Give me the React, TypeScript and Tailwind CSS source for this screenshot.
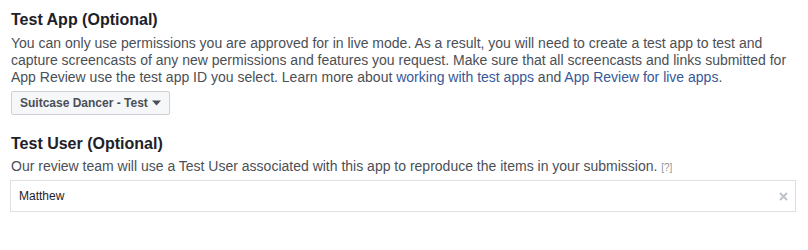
import React from "react";

export default function App() {
  return (
    <div className="w-[808px] h-[250px] bg-white pl-[11px] pr-[12px] pt-[10px]" style={{ fontFamily: '"Liberation Sans", Arial, sans-serif' }}>
      <div className="text-[16px] leading-[20px] font-bold text-[#1d2129]">Test App (Optional)</div>
      <div className="mt-[5px] text-[14px] leading-[17px] text-[#4b4f56]">
        You can only use permissions you are approved for in live mode. As a result, you will need to create a test app to test and
        capture screencasts of any new permissions and features you request. Make sure that all screencasts and links submitted for
        App Review use the test app ID you select. Learn more about <span className="text-[#365899]">working with test apps</span> and{" "}
        <span className="text-[#365899]">App Review for live apps</span>.
      </div>
      <div className="mt-[5px]">
        <button className="h-[24px] px-[8px] flex items-center gap-[4px] border border-[#ced0d4] bg-[#f6f7f9] rounded-[2px] text-[12px] font-bold text-[#4b4f56]">
          <span>Suitcase Dancer - Test</span>
          <svg width="9" height="6" viewBox="0 0 9 6"><path d="M0 0.5h9L4.5 5.5z" fill="#4b4f56" /></svg>
        </button>
      </div>
      <div className="mt-[19px] text-[16px] leading-[20px] font-bold text-[#1d2129]">Test User (Optional)</div>
      <div className="mt-[4px] text-[14px] leading-[17px] text-[#4b4f56]">
        Our review team will use a Test User associated with this app to reproduce the items in your submission.{" "}
        <span className="text-[10px] text-[#90949c]">[?]</span>
      </div>
      <div className="mt-[4px] h-[32px] border border-[#dddfe2] flex items-center justify-between pl-[8px] pr-[7px] text-[12px] text-[#1d2129] -ml-[1px]">
        <span>Matthew</span>
        <svg width="9" height="9" viewBox="0 0 9 9"><path d="M1 1L8 8M8 1L1 8" stroke="#bec3c9" strokeWidth="2" /></svg>
      </div>
    </div>
  );
}
